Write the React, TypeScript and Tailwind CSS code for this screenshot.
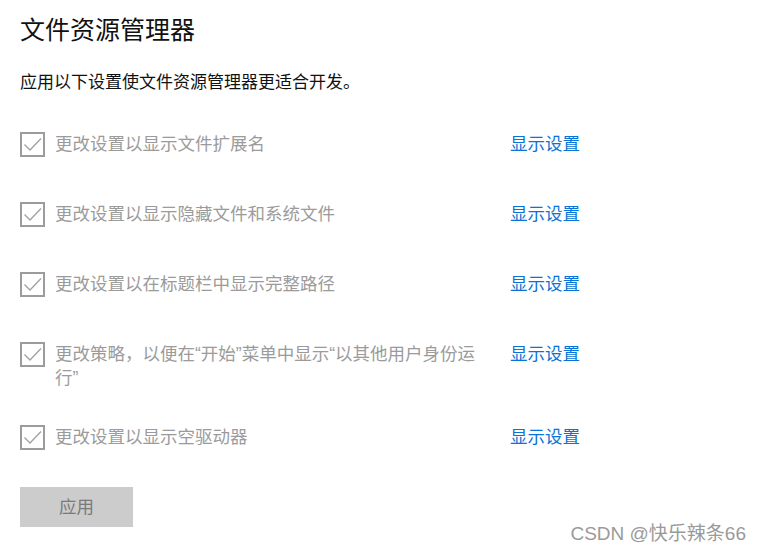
import React from 'react';

const rows = [
  { label: '更改设置以显示文件扩展名', mt: 'mt-[37px]' },
  { label: '更改设置以显示隐藏文件和系统文件', mt: 'mt-[45px]' },
  { label: '更改设置以在标题栏中显示完整路径', mt: 'mt-[45px]' },
  { label: '更改策略，以便在“开始”菜单中显示“以其他用户身份运行”', mt: 'mt-[45px]' },
  { label: '更改设置以显示空驱动器', mt: 'mt-[35px]' },
];

const CheckBox = () => (
  <div className="w-[25px] h-[25px] shrink-0 border-2 border-[#9c9c9c] bg-white flex items-center justify-center">
    <svg width="21" height="21" viewBox="0 0 21 21" fill="none">
      <path d="M2.5 10.5 L8 16 L19 4.5" stroke="#a0a0a0" strokeWidth="1.3" />
    </svg>
  </div>
);

export default function App() {
  return (
    <div
      className="relative w-full h-[553px] bg-white overflow-hidden pl-[20px] pt-[14px]"
      style={{ fontFamily: '"Liberation Sans", "Noto Sans CJK SC", sans-serif' }}
    >
      <h1 className="text-[25px] leading-[32px] text-[#111] font-normal">文件资源管理器</h1>
      <p className="mt-[25px] text-[17px] leading-[24px] text-[#111]">应用以下设置使文件资源管理器更适合开发。</p>

      {rows.map((r) => (
        <div key={r.label} className={`flex items-start ${r.mt}`}>
          <CheckBox />
          <div className="ml-[10px] w-[430px] text-[17.5px] leading-[24px] text-[#9b9b9b]">{r.label}</div>
          <a className="ml-[25px] text-[17.5px] leading-[24px] text-[#0a74d6] cursor-pointer">显示设置</a>
        </div>
      ))}

      <button className="mt-[37px] w-[113px] h-[40px] bg-[#cccccc] text-[17.5px] text-[#7a7a7a]">应用</button>

      <div className="absolute right-[14px] bottom-[7px] text-[19px] leading-[24px] text-[#9a9a9a]">
        CSDN @快乐辣条66
      </div>
    </div>
  );
}
